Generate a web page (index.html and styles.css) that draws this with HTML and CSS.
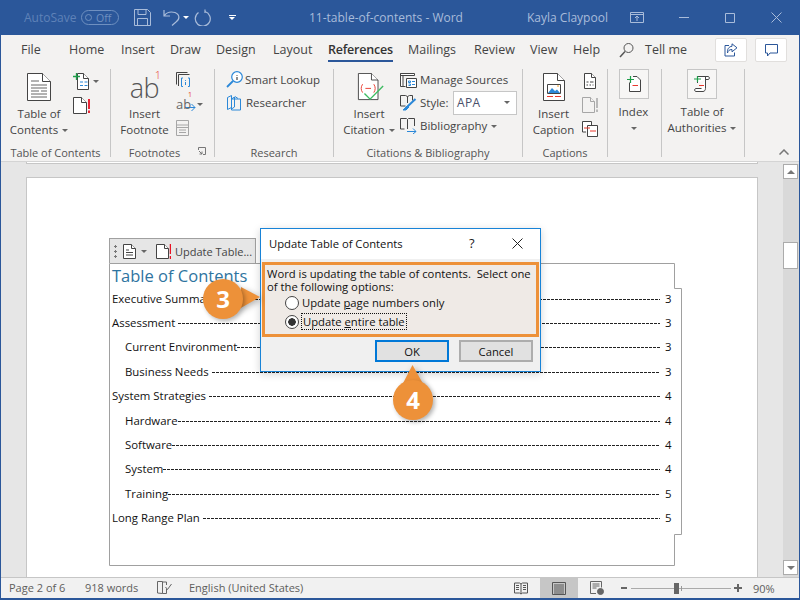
FILE: index.html
```html
<!DOCTYPE html>
<html lang="en">
<head>
<meta charset="utf-8">
<title>11-table-of-contents - Word</title>
<link rel="stylesheet" href="styles.css">
</head>
<body>
<div class="app">
  <header class="titlebar">
    <span class="autosave">AutoSave</span>
    <span class="toggle"><i class="knob"></i><span>Off</span></span>
    <svg class="qat-save" width="17" height="17" viewBox="0 0 17 17" fill="none" stroke="#a9bcda"><path d="M.5.5h13l3 3v13H.5z"/><path d="M4 .5v5h8v-5M3.500 16.500v-7h10v7"/></svg>
    <svg class="qat-undo" width="18" height="17" viewBox="0 0 18 17" fill="none" stroke="#a9bcda" stroke-width="1.200"><path d="M1 1v6h6M1.500 6.500C4 3 8 2.500 12 3.500c5 2 5 7 1 9.500l-4 3.500"/></svg>
    <i class="caret caret-white qat-caret1"></i>
    <svg class="qat-redo" width="18" height="17" viewBox="0 0 18 17" fill="none" stroke="#a9bcda" stroke-width="1.200"><path d="M11 2.500A7.500 7.500 0 1 1 4.500 3.500"/><path d="M11 .5v3.500"/></svg>
    <span class="qat-more"><i class="qat-bar"></i><i class="caret caret-white"></i></span>
    <span class="doc-title">11-table-of-contents - Word</span>
    <span class="user">Kayla Claypool</span>
    <svg class="win-display" width="14" height="11" viewBox="0 0 14 11" fill="none" stroke="#a9bcda"><path d="M.5.5h13v10H.5zM.5 2.500h13M7 9V4M5 6l2-2 2 2"/></svg>
    <svg class="win-min" width="10" height="1" viewBox="0 0 10 1"><path d="M0 .5h10" stroke="#a9bcda"/></svg>
    <svg class="win-max" width="10" height="10" viewBox="0 0 10 10"><path d="M.5.5h9v9h-9z" fill="none" stroke="#a9bcda"/></svg>
    <svg class="win-close" width="11" height="11" viewBox="0 0 11 11"><path d="M.5.5l10 10M10.500.5l-10 10" stroke="#a9bcda"/></svg>
  </header>

  <nav class="tabs">
    <span class="tab t-file">File</span>
    <span class="tab t-home">Home</span>
    <span class="tab t-insert">Insert</span>
    <span class="tab t-draw">Draw</span>
    <span class="tab t-design">Design</span>
    <span class="tab t-layout">Layout</span>
    <span class="tab t-refs active">References</span>
    <span class="tab t-mail">Mailings</span>
    <span class="tab t-review">Review</span>
    <span class="tab t-view">View</span>
    <span class="tab t-help">Help</span>
    <svg class="search" width="15" height="17" viewBox="0 0 15 17" fill="none" stroke="#555"><circle cx="9.500" cy="6" r="4.500"/><path d="M6 9.500L1 15" stroke-width="1.500"/></svg>
    <span class="tab t-tell">Tell me</span>
    <span class="tab-btn"><svg width="14" height="14" viewBox="0 0 14 14" fill="none" stroke="#2b579a"><path d="M8 .8l5 4-5 4V6.500C5 6.500 4 8 3.500 10 3 6 5 3.500 8 3.300zM5 2.500H1v10.500h9.500V9.500"/></svg></span>
    <span class="tab-btn"><svg width="13" height="13" viewBox="0 0 13 13" fill="none" stroke="#2b579a"><path d="M.5.5h12v8.500H5L2.500 12V9H.5z"/></svg></span>
  </nav>

  <section class="ribbon">
    <div class="grp g-toc">
      <div class="grp-body">
        <div class="big big-toc">
          <svg class="big-ico" width="24" height="28" viewBox="0 0 24 28" fill="#fff" stroke="#444"><path d="M.5.5h15l8 8v19H.5z"/><path d="M15.500.5v8h8" /><path d="M4 8h8M4 12h16M4 15h16M4 18h8M14 18h6M4 21h16M4 24h16" stroke="#666"/></svg>
          <span class="big-text">Table of<br>Contents<i class="caret"></i></span>
        </div>
        <div class="small-col sc-toc">
          <span class="ico-row"><svg width="16" height="17" viewBox="0 0 16 17" fill="#fff" stroke="#444"><path d="M4.500.5h6l5 5v11h-11z"/><path d="M10.500.5v5h5" /><path d="M3.500 0v7M0 3.500h7" stroke="#1e9e4a" stroke-width="1.300"/><path d="M7 9h3M11.500 9h3M7 12.500h3M11.500 12.500h3" stroke="#2b88d8"/></svg><i class="caret"></i></span>
          <span class="ico-row"><svg width="18" height="17" viewBox="0 0 18 17" fill="#fff" stroke="#444"><path d="M.5.5h8l5 5v11H.5z"/><path d="M8.500.5v5h5"/><path d="M16 2v10M16 13.500v2.500" stroke="#e81123" stroke-width="1.800" fill="none"/></svg></span>
        </div>
      </div>
      <div class="grp-label">Table of Contents</div>
    </div>

    <div class="grp g-foot">
      <div class="grp-body">
        <div class="big big-foot">
          <span class="ab-big">ab<sup class="ab-sup">1</sup></span>
          <span class="big-text">Insert<br>Footnote</span>
        </div>
        <div class="small-col sc-foot">
          <span class="ico-row"><svg width="16" height="16" viewBox="0 0 16 16" fill="none"><path d="M.5 12.500V.5h11M2.500 14V2.500h11" stroke="#444"/><path d="M7 6H5.500v8.500H7M12 6h1.500v8.500H12M9.500 8v.9M9.500 10v3" stroke="#2b88d8"/></svg></span>
          <span class="ico-row"><span class="ab-small">ab<sup class="ab-sup2">1</sup></span><svg class="ab-arrow" width="11" height="9" viewBox="0 0 11 9" fill="none" stroke="#2b88d8"><path d="M0 4.500h10M6.500 1l3.500 3.500L6.500 8"/></svg><i class="caret"></i></span>
          <span class="ico-row"><svg width="13" height="16" viewBox="0 0 13 16" fill="#f3f2f1" stroke="#a6a6a6"><path d="M.5.5h12v15H.5zM.5 5h12M.5 7.500h12M3 10h7M3 12.500h7"/></svg></span>
        </div>
      </div>
      <div class="grp-label label-foot">Footnotes</div>
      <svg class="launcher" width="8" height="8" viewBox="0 0 8 8" fill="none" stroke="#777"><path d="M.5 3V.5H7.500v7H5M1 4l3 3M4 4.500V7H1.500"/></svg>
    </div>

    <div class="grp g-res">
      <div class="grp-body res-body">
        <span class="row-cmd"><svg width="18" height="17" viewBox="0 0 18 17" fill="#fff" stroke="#2b88d8" stroke-width="1.200"><circle cx="11" cy="6" r="5.300"/><path d="M7 10l-6 6" stroke-width="1.800"/><path d="M11 4v.8M11 6v3" stroke="#444"/></svg><span class="cmd-text">Smart Lookup</span></span>
        <span class="row-cmd"><svg class="res-ico" width="14" height="16" viewBox="0 0 14 16" fill="none" stroke="#2b88d8"><path d="M.5 2.500l4-2v12l-4 2zM4.500 4l3-2v10l-3 2M4.500 4h9v11h-9zM8 1.500l3 2"/></svg><span class="cmd-text">Researcher</span></span>
      </div>
      <div class="grp-label">Research</div>
    </div>

    <div class="grp g-cit">
      <div class="grp-body">
        <div class="big big-cit">
          <svg class="big-ico" width="28" height="30" viewBox="0 0 28 30" fill="#fff" stroke="#444"><path d="M.5.5h14l7 7v21H.5z"/><path d="M14.500.5v7h7"/><path d="M5 12c-2 3-2 6 0 9M17 12c2 3 2 6 0 9M8 16.500h6" stroke="#e8392d" fill="none"/><path d="M7 22l6 6L27 14" stroke="#3dbb61" stroke-width="1.500" fill="none"/></svg>
          <span class="big-text">Insert<br>Citation<i class="caret"></i></span>
        </div>
        <div class="small-col sc-cit">
          <span class="row-cmd rc-tight"><svg width="17" height="16" viewBox="0 0 17 16" fill="#fff" stroke="#444"><path d="M.5 1.500h14v2H.5zM.5 1.500v13h5M3 3.500v11"/><path d="M6.500 6.500h10v9h-10z"/><path d="M8.500 9h2v1.500h-2zM8.500 12h2v1.500h-2M12 9.500h3M12 12.500h3" stroke="#2b88d8"/></svg><span class="cmd-text">Manage Sources</span></span>
          <span class="row-cmd rc-tight"><svg width="17" height="17" viewBox="0 0 17 17" fill="none" stroke="#444"><path d="M.5 12V1.500h5l2 1 2-1h3v5M7.500 2.500V9M.5 12h5"/><path d="M15.500 5L8 12" stroke="#2b88d8" stroke-width="2"/><path d="M7.500 11.500L3 16h3l3-3z" fill="#2b88d8" stroke="#2b88d8"/></svg><span class="cmd-text style-lbl">Style:</span><span class="combo"><span class="combo-val">APA</span><i class="caret"></i></span></span>
          <span class="row-cmd rc-tight"><svg width="17" height="17" viewBox="0 0 17 17" fill="none" stroke="#444"><path d="M.5 12V1.500h6l1 1 1-1h6V9M7.500 2.500V12M.5 12h4"/><path d="M7 14.500h9M13 11.500l3 3-3 2.500" stroke="#2b88d8"/></svg><span class="cmd-text">Bibliography<i class="caret"></i></span></span>
        </div>
      </div>
      <div class="grp-label">Citations &amp; Bibliography</div>
    </div>

    <div class="grp g-cap">
      <div class="grp-body">
        <div class="big big-cap">
          <svg class="big-ico" width="22" height="28" viewBox="0 0 22 28" fill="#fff" stroke="#444"><path d="M.5.500h14l7 7v20H.5z"/><path d="M14.500.5v7h7"/><path d="M4.500 11.500h13v9h-13z" stroke="#444"/><path d="M5 20l4-5 3 3 2-1.500 3 3.500z" fill="#2b88d8" stroke="none"/><path d="M14 13h2" stroke="#f0a030"/><path d="M4 23.500h6M12 23.500h6" stroke="#e8392d"/></svg>
          <span class="big-text">Insert<br>Caption</span>
        </div>
        <div class="small-col sc-cap">
          <span class="ico-row ir-cap1"><svg width="12" height="16" viewBox="0 0 12 16" fill="#fff" stroke="#444"><path d="M.5.500h7l4 4v11H.5z"/><path d="M7.500.5v4h4"/><path d="M2.500 9h2M6 9h3.500M2.500 12h1.500M5.500 12h1.500M8.500 12h1"/></svg></span>
          <span class="ico-row"><svg width="17" height="16" viewBox="0 0 17 16" fill="#f3f2f1" stroke="#a6a6a6"><path d="M.5.5h8l4 4v11H.5z"/><path d="M8.500.5v4h4"/><path d="M15 1v10M15 12.500v2.500" stroke-width="1.500"/></svg></span>
          <span class="ico-row"><svg width="16" height="16" viewBox="0 0 16 16" fill="#fff" stroke="#444"><path d="M4 11H.5V.5h9V4"/><path d="M5.500 4.500h10v11h-10z"/><path d="M2 7h6M8 10h6" stroke="#e8392d"/></svg></span>
        </div>
      </div>
      <div class="grp-label">Captions</div>
    </div>

    <div class="grp g-idx">
      <div class="grp-body col-center">
        <span class="boxed"><svg width="14" height="16" viewBox="0 0 14 16" fill="#fff" stroke="#444"><path d="M2.500 6.500v9h11V4l-3.500-3.500H6"/><path d="M3.500 0v7M0 3.500h7" stroke="#1e9e4a" stroke-width="1.200"/><path d="M5.500 9.500h5.500" stroke="#e8392d"/></svg></span>
        <span class="big-text boxed-text">Index<br><i class="caret caret-only"></i></span>
      </div>
    </div>

    <div class="grp g-toa">
      <div class="grp-body col-center">
        <span class="boxed"><svg width="16" height="16" viewBox="0 0 16 16" fill="#fff" stroke="#444"><path d="M3.500 7V.5h11c1 0 1 3 0 3h-3M11.500.5v12c0 1.500-1 3-2.500 3H1.500C.5 15.500.5 12.500 1.500 12.500h6"/><path d="M3.500 0v6M0 3h7" stroke="#1e9e4a" stroke-width="1.200"/><path d="M5 9.500h5" stroke="#e8392d"/></svg></span>
        <span class="big-text boxed-text">Table of<br>Authorities<i class="caret"></i></span>
      </div>
    </div>
    <svg class="collapse" width="10" height="6" viewBox="0 0 10 6" fill="none" stroke="#777" stroke-width="1.500"><path d="M.5 5.500L5 1l4.500 4.500"/></svg>
  </section>

  <main class="doc">
    <div class="prev-page"></div>
    <div class="doc-main">
      <div class="page">
        <div class="toc-bar">
          <i class="grip"></i>
          <svg width="13" height="15" viewBox="0 0 13 15" fill="#fff" stroke="#444"><path d="M.5.5h8l4 4v10H.5z"/><path d="M8.500.5v4h4M3 6h3M3 8.500h7M3 11h7"/></svg>
          <i class="caret"></i>
          <svg class="bar-ico2" width="15" height="15" viewBox="0 0 15 15" fill="#fff" stroke="#444"><path d="M.5.5h8l4 4v10H.5z"/><path d="M8.500.5v4h4"/><path d="M14.500 0v10M14.500 12v3" stroke="#e81123" stroke-width="1.500"/></svg>
          <span class="bar-text">Update Table...</span>
        </div>
        <div class="toc">
          <svg class="toc-outline" width="574" height="303" viewBox="0 0 574 303" fill="none"><path d="M.5 302.500V.5h565v25h7v246h-7v31z" stroke="#a0a0a0"/></svg>
          <div class="toc-title">Table of Contents</div>
          <div class="toc-row"><span>Executive Summary</span><i class="leader"></i><b>3</b></div>
          <div class="toc-row"><span>Assessment</span><i class="leader"></i><b>3</b></div>
          <div class="toc-row lvl2"><span>Current Environment</span><i class="leader leader-tight"></i><b>3</b></div>
          <div class="toc-row lvl2"><span>Business Needs</span><i class="leader"></i><b>3</b></div>
          <div class="toc-row"><span>System Strategies</span><i class="leader"></i><b>4</b></div>
          <div class="toc-row lvl2"><span>Hardware</span><i class="leader leader-tight"></i><b>4</b></div>
          <div class="toc-row lvl2"><span>Software</span><i class="leader leader-tight"></i><b>4</b></div>
          <div class="toc-row lvl2"><span>System</span><i class="leader leader-tight"></i><b>4</b></div>
          <div class="toc-row lvl2"><span>Training</span><i class="leader leader-tight"></i><b>5</b></div>
          <div class="toc-row"><span>Long Range Plan</span><i class="leader"></i><b>5</b></div>
        </div>
      </div>
      <div class="scrollbar">
        <span class="sb-btn"><i class="tri-up"></i></span>
        <span class="sb-thumb"></span>
        <span class="sb-btn sb-down"><i class="tri-down"></i></span>
      </div>
    </div>
  </main>

  <footer class="status">
    <span class="st-page">Page 2 of 6</span>
    <span class="st-words">918 words</span>
    <svg class="st-book" width="15" height="13" viewBox="0 0 15 13" fill="none" stroke="#666"><path d="M.5 12V.5h5v12zM5.500 12.500h4V8M5.500 1h4v3M8.500 6l2 2.500L14.500 3"/></svg>
    <span class="st-lang">English (United States)</span>
    <span class="st-right">
      <svg class="v-read" width="14" height="13" viewBox="0 0 14 13" fill="none" stroke="#555"><path d="M.5 1h5l1.500 1 1.500-1h5v10h-5L7 12l-1.500-1h-5zM7 2v10M2 3.500h3M2 5.500h3M2 7.500h3M9 3.500h3M9 5.500h3M9 7.500h3"/></svg>
      <span class="v-active"><svg width="14" height="13" viewBox="0 0 14 13" fill="none" stroke="#555"><path d="M.5.5h13v12H.5zM2 3h10M2 5h10M2 7h10M2 9h10M2 11h10"/></svg></span>
      <svg class="v-web" width="14" height="14" viewBox="0 0 14 14" fill="none" stroke="#666"><path d="M6 12.500H.5V.5h11v6M2.500 3h7M2.500 5h7M2.500 7h4"/><circle cx="10.500" cy="10.500" r="3" fill="#666"/></svg>
      <i class="z-minus"></i>
      <span class="z-track"><i class="z-tick"></i><i class="z-thumb"></i></span>
      <i class="z-plus"></i>
      <span class="z-pct">90%</span>
    </span>
  </footer>

  <div class="dialog">
    <div class="dlg-head">
      <span class="dlg-title">Update Table of Contents</span>
      <span class="dlg-help">?</span>
      <svg class="dlg-x" width="11" height="11" viewBox="0 0 11 11"><path d="M.5.5l10 10M10.500.5l-10 10" stroke="#222"/></svg>
    </div>
    <div class="dlg-body">
      <div class="dlg-highlight">
        <p class="dlg-msg">Word is updating the table of contents.&nbsp; Select one<br>of the following options:</p>
        <div class="radio-row"><i class="radio"></i><span>Update <u>p</u>age numbers only</span></div>
        <div class="radio-row"><i class="radio on"></i><span class="focus">Update <u>e</u>ntire table</span></div>
      </div>
      <div class="dlg-btns">
        <span class="btn btn-ok">OK</span>
        <span class="btn">Cancel</span>
      </div>
    </div>
  </div>

  <svg class="callout c3" width="64" height="56" viewBox="0 0 64 56"><path d="M44 16L63 26 42 38z" fill="#ed9139"/></svg>
  <div class="num n3">3</div>
  <svg class="callout c4" width="40" height="30" viewBox="0 0 40 30"><path d="M19.500 0L7 24h26z" fill="#ed9139"/></svg>
  <div class="num n4">4</div>
</div>
</body>
</html>
```
FILE: styles.css
```css
* { box-sizing: border-box; }
html, body { margin: 0; padding: 0; }
body { font-family: "Open Sans", "Liberation Sans", sans-serif; background: #fff; }
i { display: inline-block; font-style: normal; }
svg { display: block; flex: none; }

.app { position: relative; width: 800px; height: 600px; overflow: hidden; display: flex; flex-direction: column; background: #2b579a; padding: 0 1px 2px 1px; }

.caret { width: 0; height: 0; border-left: 3px solid transparent; border-right: 3px solid transparent; border-top: 3px solid #666; margin-left: 4px; vertical-align: middle; }
.caret-white { border-top-color: #fff; }

/* title bar */
.titlebar { height: 35px; flex: none; display: flex; align-items: center; color: #a9bcda; font-size: 12px; }
.autosave { margin-left: 23px; width: 57px; color: #5f82b8; }
.toggle { width: 38px; height: 15px; border: 1px solid #6f90c0; border-radius: 8px; display: flex; align-items: center; color: #6f90c0; font-size: 10.500px; padding-left: 3px; gap: 4px; }
.knob { width: 7px; height: 7px; border-radius: 50%; border: 1px solid #6f90c0; }
.qat-save { margin-left: 15px; }
.qat-undo { margin-left: 12px; }
.qat-caret1 { margin-left: 2px; }
.qat-redo { margin-left: 5px; }
.qat-more { margin-left: 17px; width: 7px; display: flex; flex-direction: column; gap: 1px; }
.qat-more .caret { margin: 0; border-width: 3px 3.500px 0; }
.qat-bar { width: 7px; height: 1px; background: #fff; }
.doc-title { margin-left: 73px; width: 218px; }
.user { width: 103px; }
.win-min { margin-left: 35px; }
.win-max { margin-left: 36px; }
.win-close { margin-left: 36px; }

/* tabs */
.tabs { height: 27px; flex: none; background: #f3f2f1; display: flex; align-items: flex-start; font-size: 12.500px; color: #444; }
.tab { display: block; height: 27px; line-height: 30px; flex: none; }
.t-file { margin-left: 20px; width: 48px; }
.t-home { width: 52px; }
.t-insert { width: 49px; }
.t-draw { width: 46px; }
.t-design { width: 57px; }
.t-layout { width: 55px; }
.t-refs { width: 65px; margin-right: 15px; }
.t-mail { width: 66px; }
.t-review { width: 56px; }
.t-view { width: 43px; }
.t-help { width: 46px; }
.t-tell { width: 70px; margin-left: 11px; }
.active { color: #333; font-weight: 600; border-bottom: 2px solid #2b579a; letter-spacing: -.2px; }
.search { margin-top: 7px; }
.tab-btn { width: 32px; height: 24px; margin-top: 3px; background: #fff; border: 1px solid #e1dfdd; border-radius: 2px; display: flex; align-items: center; justify-content: center; margin-right: 8px; }

/* ribbon */
.ribbon { position: relative; height: 100px; flex: none; background: #f3f2f1; display: flex; align-items: flex-start; padding-top: 7px; color: #444; font-size: 11.500px; border-bottom: 1px solid #d4d4d4; }
.grp { position: relative; height: 88px; flex: none; border-right: 1px solid #c6c6c6; display: flex; flex-direction: column; }
.grp-body { flex: 1; min-height: 0; display: flex; align-items: flex-start; }
.grp-label { height: 14px; line-height: 14px; margin-bottom: -3px; text-align: center; font-size: 11px; color: #555; white-space: nowrap; }
.label-foot { padding-right: 16px; }
.g-toc { width: 110px; }
.g-foot { width: 104px; }
.g-res { width: 119px; }
.g-cit { width: 189px; }
.g-cap { width: 85px; }
.g-idx { width: 54px; padding-right: 2px; }
.g-toa { width: 83px; padding-right: 2px; }

.big { display: flex; flex-direction: column; align-items: center; padding-top: 4px; flex: none; }
.big-text { display: block; line-height: 16px; text-align: center; white-space: nowrap; }
.big-ico { margin-bottom: 5px; height: 28px; }
.big-toc { width: 60px; margin-left: 8px; }
.big-foot { width: 63px; margin-left: 2px; }
.big-cit { width: 60px; margin-left: 5px; }
.big-cap { width: 57px; margin-left: 2px; }
.big-cit .big-ico { margin-left: 4px; }

.small-col { display: flex; flex-direction: column; }
.ico-row { display: flex; align-items: center; height: 24px; flex: none; }
.sc-toc { margin-left: 4px; }
.sc-foot { margin-top: -1px; }
.ir-cap1 { padding-left: 2px; }

.ab-big { position: relative; display: block; height: 33px; line-height: 30px; font-size: 27px; font-weight: 300; color: #555; letter-spacing: -.5px; }
.ab-sup { position: absolute; left: 25px; top: -5px; font-size: 11px; line-height: 14px; color: #e8392d; vertical-align: baseline; letter-spacing: 0; }
.ab-small { position: relative; font-size: 13px; color: #666; }
.ab-sup2 { position: absolute; left: 12px; top: -4px; font-size: 7px; line-height: 8px; color: #e8392d; vertical-align: baseline; }
.ab-arrow { margin-left: -6px; margin-top: 7px; }
.ico-row .ab-arrow + .caret { margin-left: 1px; }
.launcher { position: absolute; left: 87px; top: 78px; }

.res-body { flex-direction: column; padding: 2px 0 0 11px; gap: 6px; }
.row-cmd { display: flex; align-items: center; gap: 3px; height: 17px; white-space: nowrap; flex: none; }
.res-body .row-cmd { gap: 1px; }
.res-ico { margin: 0 4px 0 1px; }
.rc-tight { height: 23px; }
.sc-cit { margin-left: 1px; margin-top: -1px; }
.cmd-text { display: block; }
.style-lbl { width: 30px; }
.combo { width: 64px; height: 24px; background: #fff; border: 1px solid #c6c6c6; display: flex; align-items: center; justify-content: space-between; padding: 0 6px 0 3px; }
.combo-val { color: #4a4f6a; font-size: 12px; letter-spacing: .4px; }

.col-center { flex-direction: column; align-items: center; }
.boxed { width: 30px; height: 30px; border: 1px solid #c6c6c6; background: #f7f6f5; display: flex; align-items: center; justify-content: center; }
.boxed-text { margin-top: 5px; }
.caret-only { margin: 0; }
.collapse { position: absolute; right: 10px; top: 87px; }

/* document */
.doc { flex: 1; min-height: 0; background: #e6e6e6; display: flex; flex-direction: column; }
.prev-page { margin: 0 40px 0 25px; width: 732px; height: 2px; background: #fff; border: 1px solid #c6c6c6; border-top: 0; flex: none; }
.doc-main { flex: 1; min-height: 0; display: flex; align-items: flex-start; padding-top: 13px; position: relative; }
.page { width: 732px; height: 420px; margin-left: 25px; background: #fff; border: 1px solid #c6c6c6; border-bottom: 0; padding: 60px 0 0 82px; flex: none; }
.toc-bar { width: 147px; height: 25px; background: #e6e6e6; border: 1px solid #a0a0a0; border-bottom: 0; display: flex; align-items: center; padding-left: 4px; font-size: 11px; color: #444; }
.grip { width: 3px; height: 14px; background: radial-gradient(circle, #777 1.300px, transparent 1.400px) 0 0 / 3px 5px; margin-right: 5px; }
.toc-bar svg:first-of-type { margin-left: 1px; }
.toc-bar .caret { margin: 0 4px 0 5px; }
.toc-bar .bar-ico2 { margin-left: 5px; }
.bar-text { margin-left: 4px; white-space: nowrap; }
.toc { position: relative; width: 566px; height: 302px; padding: 1px 0 0 3px; }
.toc-outline { position: absolute; left: 0; top: 0; }
.toc-title { height: 22px; line-height: 24px; font-size: 16.500px; color: #2e74a0; }
.toc-row { height: 24.400px; display: flex; align-items: center; font-size: 11.400px; color: #111; white-space: nowrap; }
.toc-row b { font-weight: 400; width: 14px; text-align: left; padding-left: 4px; }
.lvl2 { padding-left: 13px; }
.leader { flex: 1; height: 1px; margin: 2px 1px 0 3px; background: repeating-linear-gradient(90deg, #222 0 3px, transparent 3px 4px); }
.leader-tight { margin-left: 0; }

.scrollbar { position: absolute; right: 0; top: 0; bottom: 0; width: 16px; background: #d9d9d9; display: flex; flex-direction: column; }
.sb-btn { height: 15px; width: 15px; background: #fff; border: 1px solid #ababab; display: flex; align-items: center; justify-content: center; flex: none; }
.tri-up { border-left: 4px solid transparent; border-right: 4px solid transparent; border-bottom: 4px solid #777; }
.tri-down { border-left: 4px solid transparent; border-right: 4px solid transparent; border-top: 4px solid #777; }
.sb-thumb { width: 15px; height: 27px; margin-top: 63px; background: #fff; border: 1px solid #ababab; flex: none; }
.sb-down { margin-top: auto; margin-bottom: 2px; }

/* status bar */
.status { height: 21px; flex: none; background: #f1f1f1; border-top: 1px solid #c6c6c6; display: flex; align-items: center; font-size: 11px; color: #605e5c; position: relative; padding-bottom: 2px; }
.st-page { margin-left: 8px; width: 76px; }
.st-words { width: 72px; }
.st-lang { margin-left: 17px; }
.st-right { position: absolute; left: 513px; top: 0; height: 20px; display: flex; align-items: center; }
.v-active { width: 38px; height: 20px; background: #c6c6c6; display: flex; align-items: center; justify-content: center; margin: 0 12px; }
.z-minus { width: 6px; height: 2px; background: #666; margin-left: 17px; }
.z-track { position: relative; width: 100px; height: 1px; background: #aaa; margin: 0 3px 0 4px; }
.z-thumb { position: absolute; left: 43px; top: -5px; width: 5px; height: 11px; background: #666; }
.z-tick { position: absolute; left: 50px; top: -2px; width: 1px; height: 5px; background: #999; }
.z-plus { width: 8px; height: 8px; background: linear-gradient(#666,#666) center / 8px 2px no-repeat, linear-gradient(#666,#666) center / 2px 8px no-repeat; }
.z-pct { margin-left: 11px; }

/* dialog */
.dialog { position: absolute; left: 260px; top: 228px; width: 281px; height: 144px; border: 1px solid #1883d7; background: #f0f0f0; box-shadow: 0 2px 8px rgba(0,0,0,.18); font-size: 11.250px; color: #111; }
.dlg-head { height: 30px; background: #fff; display: flex; align-items: center; padding: 0 0 2px 8px; }
.dlg-title { width: 200px; }
.dlg-help { width: 43px; font-size: 13px; color: #222; }
.dlg-highlight { margin: 3px 1px 0; height: 75px; background: #efeae6; border: 3px solid #ed9139; padding: 2px 0 0 2px; }
.dlg-msg { margin: 0; line-height: 13px; white-space: nowrap; }
.radio-row { display: flex; align-items: center; height: 19px; padding-left: 18px; gap: 3px; white-space: nowrap; }
.radio { width: 14px; height: 14px; border-radius: 50%; background: #fff; border: 1px solid #444; flex: none; }
.radio.on { background: radial-gradient(circle, #333 3.500px, #fff 4px); }
.focus { outline: 1px dotted #111; padding: 0 1px; }
.dlg-btns { display: flex; justify-content: flex-end; gap: 10px; padding: 3px 7px 0 0; }
.btn { width: 74px; height: 22px; background: #e1e1e1; border: 2px solid #adadad; display: flex; align-items: center; justify-content: center; }
.btn-ok { border-color: #0078d7; }

/* callouts */
.callout { position: absolute; filter: drop-shadow(2px 2px 3px rgba(0,0,0,.3)); }
.c3 { left: 197px; top: 271px; }
.c4 { left: 393px; top: 365px; }
.num { position: absolute; width: 40px; height: 40px; border-radius: 50%; background: #ed9139; color: #fff; font-weight: 700; font-size: 24px; line-height: 40px; text-align: center; box-shadow: 2px 2px 4px rgba(0,0,0,.3); }
.n3 { left: 203px; top: 279px; }
.n4 { left: 393px; top: 380px; }
```
